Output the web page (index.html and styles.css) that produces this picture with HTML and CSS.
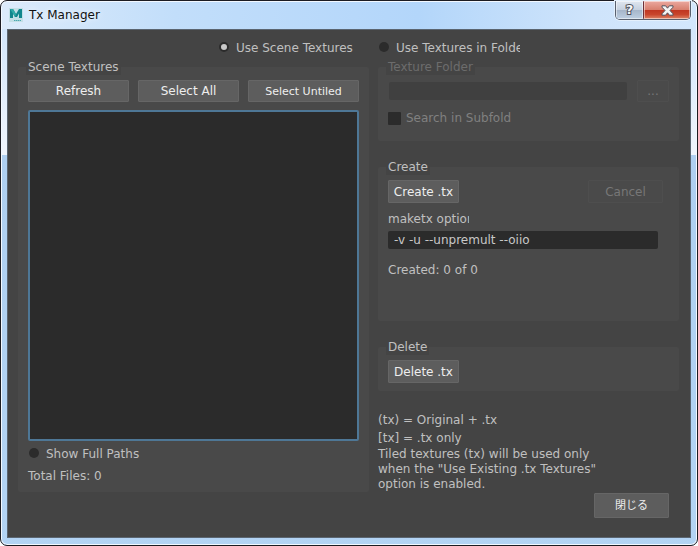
FILE: index.html
```html
<!DOCTYPE html>
<html lang="ja">

<head>
  <meta charset="UTF-8">
  <meta name="viewport" content="width=device-width, initial-scale=1.0">
  <title>Tx Manager</title>
  <link rel="stylesheet" href="styles.css">
</head>

<body>
  <div class="window">
    <header class="titlebar">
      <svg class="logo" viewBox="0 0 14 14" aria-hidden="true">
        <rect width="14" height="14" fill="#c3dfe6"/>
        <path d="M1 1h3l3 5 3-5h3v9h-3V5.500L8 9H6L4 5.500V10H1z" fill="#12868c"/>
        <path d="M1 1h3l3 5-1 3-2-3.500z" fill="#2fa9a6"/>
        <path d="M5 12.500h7" stroke="#4aa9b0" stroke-dasharray="1.500 .500"/>
      </svg>
      <h1>Tx Manager</h1>
      <div class="caption-buttons">
        <button type="button" class="help" aria-label="Help">?</button>
        <button type="button" class="close" aria-label="Close">
          <svg width="13" height="11" viewBox="0 0 13 11">
            <path d="M1 .8h3.600l1.900 2.400L8.400 .8H12v1.400L9 5.500l3 3.300v1.400H8.400L6.500 7.800 4.600 10.200H1V8.800L4 5.500 1 2.200z" fill="#f4f4f4" stroke="#53505c"/>
          </svg>
        </button>
      </div>
    </header>

    <main class="client">
      <div class="modes">
        <label class="mode"><input type="radio" name="mode" checked>Use Scene Textures</label>
        <label class="mode mode-folder"><input type="radio" name="mode">Use Textures in Folder</label>
      </div>

      <div class="columns">
        <fieldset class="scene">
          <legend>Scene Textures</legend>
          <div class="scene-body">
            <div class="scene-buttons">
              <button type="button">Refresh</button>
              <button type="button">Select All</button>
              <button type="button" class="untiled">Select Untiled</button>
            </div>
            <select class="list" size="10" aria-label="Scene Textures"></select>
            <label class="full-paths"><input type="radio" name="paths">Show Full Paths</label>
            <p class="total">Total Files: 0</p>
          </div>
        </fieldset>

        <div class="side">
          <fieldset class="folder" disabled>
            <legend>Texture Folder</legend>
            <div class="folder-path">
              <input type="text" aria-label="Texture Folder">
              <button type="button">...</button>
            </div>
            <label class="subfolders"><input type="checkbox"><span>Search in Subfolders</span></label>
          </fieldset>

          <fieldset class="create">
            <legend>Create</legend>
            <div class="create-buttons">
              <button type="button" class="action">Create .tx</button>
              <button type="button" class="cancel" disabled>Cancel</button>
            </div>
            <label class="options-label" for="options">maketx options</label>
            <input type="text" id="options" value="-v -u --unpremult --oiio">
            <p class="created">Created: 0 of 0</p>
          </fieldset>

          <fieldset class="delete">
            <legend>Delete</legend>
            <button type="button" class="action">Delete .tx</button>
          </fieldset>

          <div class="notes">
            <p>(tx) = Original + .tx</p>
            <p>[tx] = .tx only</p>
            <p class="hint">Tiled textures (tx) will be used only<br>when the "Use Existing .tx Textures"<br>option is enabled.</p>
          </div>
        </div>
      </div>

      <footer>
        <button type="button" class="dismiss">閉じる</button>
      </footer>
    </main>
  </div>
</body>

</html>
```
FILE: styles.css
```css
* {
  box-sizing: border-box;
}
body {
  margin: 0;
  background: #fff;
  color: #c0c0c0;
  font: 12px/16px "DejaVu Sans", "Noto Sans CJK JP", sans-serif;
}
h1, p {
  margin: 0;
}

/* window frame */
.window {
  display: flex;
  flex-direction: column;
  min-height: 100vh;
  padding: 0 6px 7px;
  border: 1px solid #1c1c22;
  border-radius: 7px;
  background:
    linear-gradient(90deg, #dcebfb, #c2defa 25%, #b3d6fa 60%, #cfe4fb 85%, #d3e7fc) 0 0 / 100% 28px no-repeat,
    linear-gradient(#d3e6fb, #f0f5fc 126px, #aecff0 126px, #b3d4f4) 0 28px / 100% 100% no-repeat;
  box-shadow: inset 0 0 0 1px #f2f8ff;
}
.titlebar {
  display: flex;
  align-items: flex-start;
  height: 28px;
}
.logo {
  width: 14px;
  height: 14px;
  margin: 7px 6px 0 2px;
}
.titlebar h1 {
  flex: 1;
  padding-top: 6px;
  color: #111;
  font-size: 12px;
  font-weight: normal;
  text-shadow: 0 0 6px #fff;
}
.caption-buttons {
  display: flex;
  height: 19px;
  border: 1px solid #59616f;
  border-top: 0;
  border-radius: 0 0 5px 5px;
  overflow: hidden;
  box-shadow: 0 0 0 1px #e4f0fc;
}
.caption-buttons button {
  display: flex;
  align-items: center;
  justify-content: center;
  height: 18px;
  padding: 0;
  border: 0;
  box-shadow: inset 0 0 0 1px rgba(255, 255, 255, .5);
}
.caption-buttons .help {
  width: 27px;
  background: linear-gradient(#dfe6ef, #c5d0de 50%, #a5b5c9 50%, #bdcfe2);
  color: #f8f8f8;
  font: bold 13px/18px "DejaVu Sans", sans-serif;
  -webkit-text-stroke: 2px #50535f;
  paint-order: stroke fill;
}
.caption-buttons .close {
  width: 47px;
  border-left: 1px solid #6d3038;
  background: linear-gradient(#eba9a0, #d8806f 48%, #bf3520 50%, #c8452c 75%, #dd8466);
}

/* dialog body */
.client {
  display: flex;
  flex: 1;
  flex-direction: column;
  padding: 10px 11px 19px 10px;
  border: 1px solid #5b6570;
  background: #444;
}
.modes {
  display: grid;
  grid-template-columns: 351fr 301fr;
  gap: 9px;
  height: 19px;
}
.mode {
  overflow: hidden;
  white-space: nowrap;
}
.mode:first-child {
  justify-self: end;
  width: 151px;
}
.mode-folder {
  width: 142px;
}
.columns {
  display: grid;
  flex: 1;
  grid-template-columns: 351fr 301fr;
  gap: 9px;
}
fieldset {
  min-width: 0;
  margin: 0;
  padding: 5px 10px 8px;
  border: 0;
  border-radius: 2px;
  background: #494949;
}
legend {
  margin-left: -2px;
  padding: 0 2px;
  background: #444;
}
button {
  height: 22px;
  padding: 0;
  border: 1px solid #666;
  border-radius: 1px;
  background: #5d5d5d;
  color: #eee;
  font: inherit;
}
button:disabled {
  border-color: #4e4e4e;
  background: #4a4a4a;
  color: #777;
}
input[type="text"] {
  width: 100%;
  min-width: 0;
  height: 18px;
  padding: 0 6px;
  border: 0;
  border-radius: 2px;
  background: #2b2b2b;
  color: #c8c8c8;
  font: inherit;
}
input[type="text"]:disabled {
  background: #404040;
}
input[type="radio"] {
  appearance: none;
  width: 10px;
  height: 10px;
  margin: 0 7px 0 1px;
  border-radius: 50%;
  background: #2b2b2b;
}
input[type="radio"]:checked {
  border: 2px solid #2b2b2b;
  background: #c8c8c8;
}

/* scene textures */
.scene {
  height: 100%;
}
.scene-body {
  display: flex;
  flex-direction: column;
  height: 100%;
}
.scene-buttons {
  display: grid;
  grid-template-columns: 101fr 101fr 111fr;
  gap: 9px;
  margin-bottom: 8px;
}
.untiled {
  padding-top: 2px;
  font-size: 11px;
}
.list {
  flex: 1;
  width: 100%;
  margin-bottom: 5px;
  border: 2px solid #4e7796;
  border-radius: 2px;
  outline: 0;
  background: #2b2b2b;
  color: #c8c8c8;
}
.full-paths {
  margin-bottom: 6px;
}

/* right column */
.side {
  display: flex;
  flex-direction: column;
  gap: 18px;
}
.folder {
  height: 82px;
  color: #6c6c6c;
}
.folder-path {
  display: flex;
  align-items: center;
  gap: 10px;
  padding-left: 1px;
}
.folder-path button {
  flex: 0 0 32px;
}
.subfolders {
  display: flex;
  align-items: center;
  gap: 5px;
  margin-top: 8px;
  color: #808080;
}
.subfolders input {
  appearance: none;
  width: 13px;
  height: 13px;
  margin: 0;
  border-radius: 1px;
  background: #2b2b2b;
}
.subfolders span {
  width: 105px;
  overflow: hidden;
  white-space: nowrap;
}
.create {
  height: 162px;
  padding-right: 21px;
}
.create-buttons {
  display: flex;
  justify-content: space-between;
  margin: 0 -5px 8px 0;
}
.action {
  width: 71px;
  height: 23px;
}
.cancel {
  width: 75px;
  height: 23px;
}
.options-label {
  display: block;
  width: 81px;
  margin-bottom: 4px;
  overflow: hidden;
  white-space: nowrap;
}
.created {
  margin-top: 13px;
}
.delete {
  height: 52px;
}
.notes {
  margin-top: 2px;
  line-height: 18px;
}
.hint {
  line-height: 15px;
}
footer {
  display: flex;
  justify-content: flex-end;
  padding: 1px 10px 0;
}
.dismiss {
  width: 75px;
  height: 25px;
  font-size: 11px;
}
```
